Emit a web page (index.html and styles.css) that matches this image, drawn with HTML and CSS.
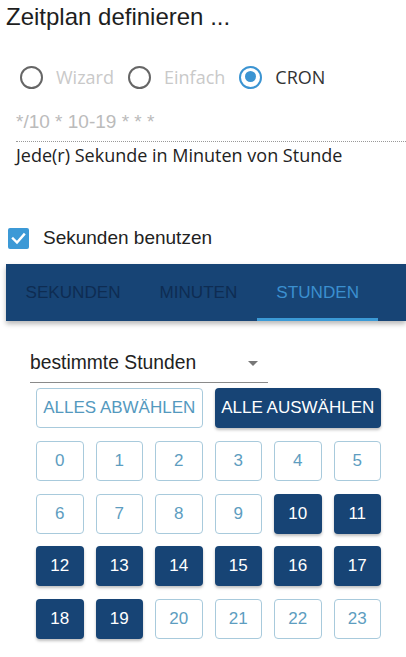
FILE: index.html
```html
<!DOCTYPE html>
<html lang="de">
<head>
<meta charset="utf-8">
<title>Zeitplan</title>
<link rel="stylesheet" href="styles.css">
</head>
<body>
<h1 class="title">Zeitplan definieren ...</h1>
<div class="radios">
  <label class="radio"><span class="circle"></span><span class="rlabel disabled">Wizard</span></label>
  <label class="radio"><span class="circle"></span><span class="rlabel disabled">Einfach</span></label>
  <label class="radio"><span class="circle checked"></span><span class="rlabel">CRON</span></label>
</div>
<div class="cron-input">*/10 * 10-19 * * *</div>
<div class="desc">Jede(r) Sekunde in Minuten von Stunde</div>
<div class="check-row">
  <span class="checkbox"><svg width="21" height="21" viewBox="0 0 21 21"><polyline points="5,10.5 9,14.5 16,6.5" fill="none" stroke="#fff" stroke-width="2.4" stroke-linecap="square"/></svg></span>
  <span class="check-label">Sekunden benutzen</span>
</div>
<div class="tabbar">
  <div class="tab">SEKUNDEN</div>
  <div class="tab">MINUTEN</div>
  <div class="tab active">STUNDEN</div>
</div>
<div class="select">
  <span>bestimmte Stunden</span>
  <span class="arrow"></span>
</div>
<div class="actions">
  <button class="btn outline">ALLES ABWÄHLEN</button>
  <button class="btn filled">ALLE AUSWÄHLEN</button>
</div>
<div class="hours">
  <button class="hour">0</button>
  <button class="hour">1</button>
  <button class="hour">2</button>
  <button class="hour">3</button>
  <button class="hour">4</button>
  <button class="hour">5</button>
  <button class="hour">6</button>
  <button class="hour">7</button>
  <button class="hour">8</button>
  <button class="hour">9</button>
  <button class="hour on">10</button>
  <button class="hour on">11</button>
  <button class="hour on">12</button>
  <button class="hour on">13</button>
  <button class="hour on">14</button>
  <button class="hour on">15</button>
  <button class="hour on">16</button>
  <button class="hour on">17</button>
  <button class="hour on">18</button>
  <button class="hour on">19</button>
  <button class="hour">20</button>
  <button class="hour">21</button>
  <button class="hour">22</button>
  <button class="hour">23</button>
</div>
</body>
</html>
```
FILE: styles.css
```css
html, body {
  margin: 0;
  padding: 0;
  background: #fff;
}
body {
  width: 406px;
  height: 657px;
  overflow: hidden;
  font-family: "Liberation Sans", Arial, sans-serif;
  color: #222;
}
.title {
  margin: 0;
  padding: 3px 0 0 6px;
  font-size: 24px;
  line-height: 28px;
  font-weight: normal;
  color: #1e1e1e;
}
.radios {
  display: flex;
  align-items: center;
  height: 26px;
  margin-top: 33px;
  padding-left: 20px;
  font-family: "Open Sans", sans-serif;
  font-size: 18px;
}
.radio {
  display: flex;
  align-items: center;
  margin-right: 14px;
}
.circle {
  box-sizing: border-box;
  width: 23px;
  height: 23px;
  border: 2.5px solid #666;
  border-radius: 50%;
  margin-right: 13px;
  position: relative;
}
.circle.checked {
  border-color: #3b94d2;
}
.circle.checked::after {
  content: "";
  position: absolute;
  left: 3.5px;
  top: 3.5px;
  width: 11px;
  height: 11px;
  border-radius: 50%;
  background: #3b94d2;
}
.rlabel {
  color: #333;
}
.rlabel.disabled {
  color: #c9c9c9;
}
.cron-input {
  margin: 21px 0 0 16px;
  padding-bottom: 8px;
  font-size: 19px;
  line-height: 22px;
  color: #bbb;
  border-bottom: 1px dotted #999;
}
.desc {
  margin-top: 2px;
  padding-left: 16px;
  font-family: "Open Sans", sans-serif;
  font-size: 18px;
  line-height: 22px;
  color: #222;
}
.check-row {
  display: flex;
  align-items: center;
  height: 22px;
  margin-top: 61px;
  padding-left: 8px;
}
.checkbox {
  width: 21px;
  height: 21px;
  border-radius: 2px;
  background: #3c99d6;
  margin-right: 14px;
  display: flex;
}
.check-label {
  font-size: 19px;
  color: #222;
}
.tabbar {
  display: flex;
  height: 57px;
  margin: 15px 0 0 6px;
  background: #174475;
  box-shadow: 0 3px 5px rgba(0, 0, 0, 0.28);
}
.tab {
  box-sizing: border-box;
  display: flex;
  align-items: center;
  padding: 0 19.5px 0;
  font-size: 17.1px;
  color: #0e2c52;
}
.tab.active {
  color: #3b8fcf;
  box-shadow: inset 0 -3px 0 #3b9ad6;
}
.select {
  display: flex;
  justify-content: space-between;
  align-items: center;
  width: 238px;
  margin: 31px 0 0 30px;
  padding: 0 10px 8px 0;
  box-sizing: border-box;
  font-size: 19.3px;
  line-height: 22px;
  color: #222;
  border-bottom: 1px solid #8a8a8a;
}
.arrow {
  width: 0;
  height: 0;
  border-left: 5.5px solid transparent;
  border-right: 5.5px solid transparent;
  border-top: 5.5px solid #777;
}
.actions {
  display: grid;
  grid-template-columns: 1fr 1fr;
  column-gap: 12px;
  width: 345px;
  margin: 5px 0 0 36px;
}
.btn {
  height: 40px;
  border-radius: 4px;
  font-family: "Liberation Sans", Arial, sans-serif;
  font-size: 17px;
  padding: 0;
  cursor: pointer;
}
.outline {
  background: #fff;
  border: 1px solid #a8cadc;
  color: #5499be;
}
.filled {
  background: #174475;
  border: none;
  color: #fff;
  box-shadow: 0 2px 3px rgba(0, 0, 0, 0.25);
}
.hours {
  display: grid;
  grid-template-columns: repeat(6, 1fr);
  grid-auto-rows: 40px;
  column-gap: 12px;
  row-gap: 12.5px;
  width: 345px;
  margin: 13px 0 0 36px;
}
.hour {
  border-radius: 4px;
  font-family: "Liberation Sans", Arial, sans-serif;
  font-size: 17px;
  padding: 0;
  background: #fff;
  border: 1px solid #a8cadc;
  color: #5d9dc0;
}
.hour.on {
  background: #174475;
  border: none;
  color: #fff;
  box-shadow: 0 2px 3px rgba(0, 0, 0, 0.25);
}
```
